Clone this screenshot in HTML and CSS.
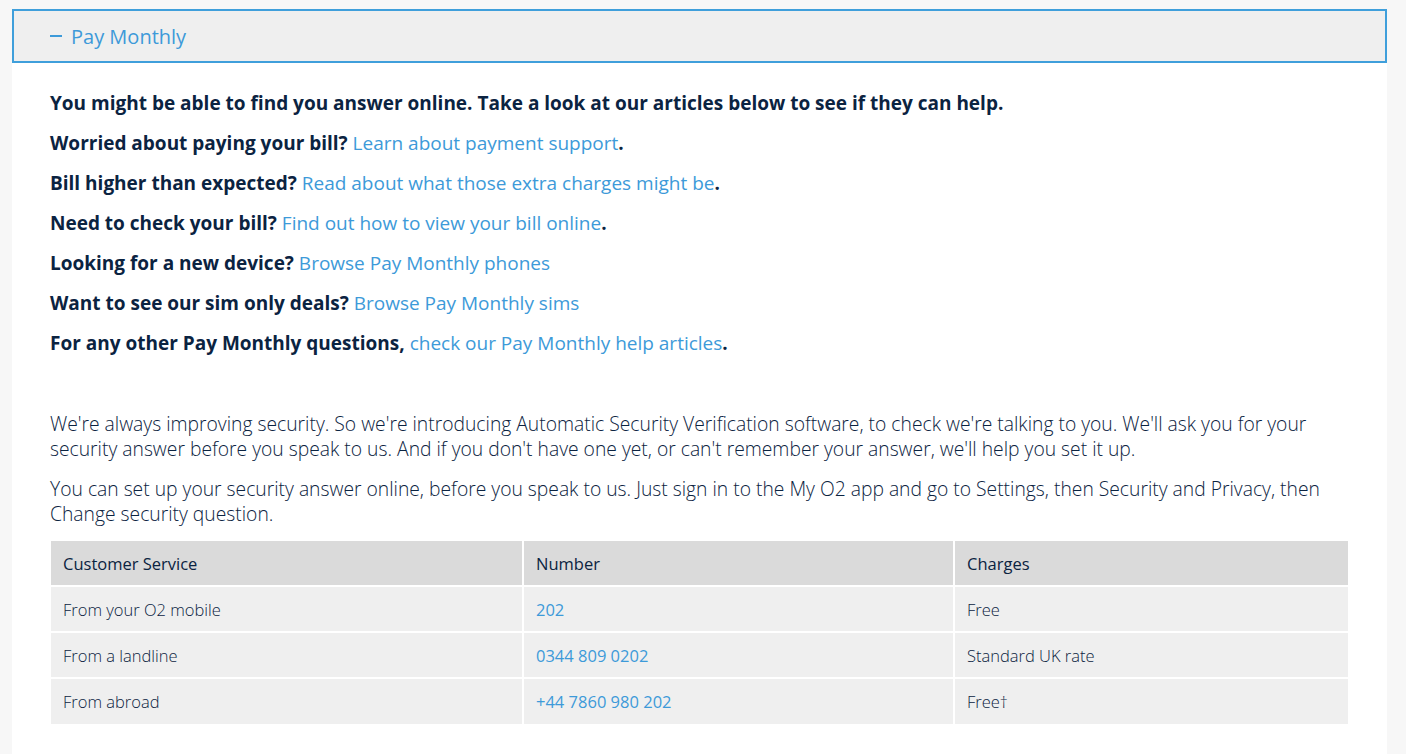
FILE: index.html
```html
<!DOCTYPE html>
<html lang="en">
<head>
    <meta charset="UTF-8">
    <meta name="viewport" content="width=device-width, initial-scale=1.0">
    <title>Pay Monthly - Contact us</title>
    <link rel="stylesheet" href="styles.css">
</head>
<body>
    <div class="accordion">
        <div class="accordion-header">
            <span class="toggle"></span>
            <span class="accordion-title">Pay Monthly</span>
        </div>
        <div class="accordion-body">
            <p class="lead">You might be able to find you answer online. Take a look at our articles below to see if they can help.</p>
            <p class="lead">Worried about paying your bill? <a href="#">Learn about payment support</a>.</p>
            <p class="lead">Bill higher than expected? <a href="#">Read about what those extra charges might be</a>.</p>
            <p class="lead">Need to check your bill? <a href="#">Find out how to view your bill online</a>.</p>
            <p class="lead">Looking for a new device? <a href="#">Browse Pay Monthly phones</a></p>
            <p class="lead">Want to see our sim only deals? <a href="#">Browse Pay Monthly sims</a></p>
            <p class="lead">For any other Pay Monthly questions, <a href="#">check our Pay Monthly help articles</a>.</p>

            <div class="security">
                <p>We're always improving security. So we're introducing Automatic Security Verification software, to check we're talking to you. We'll ask you for your security answer before you speak to us. And if you don't have one yet, or can't remember your answer, we'll help you set it up.</p>
                <p>You can set up your security answer online, before you speak to us. Just sign in to the My O2 app and go to Settings, then Security and Privacy, then Change security question.</p>
            </div>

            <table class="numbers">
                <thead>
                    <tr>
                        <th class="col-service">Customer Service</th>
                        <th class="col-number">Number</th>
                        <th>Charges</th>
                    </tr>
                </thead>
                <tbody>
                    <tr>
                        <td>From your O2 mobile</td>
                        <td><a href="#">202</a></td>
                        <td>Free</td>
                    </tr>
                    <tr>
                        <td>From a landline</td>
                        <td><a href="#">0344 809 0202</a></td>
                        <td>Standard UK rate</td>
                    </tr>
                    <tr>
                        <td>From abroad</td>
                        <td><a href="#">+44 7860 980 202</a></td>
                        <td>Free&dagger;</td>
                    </tr>
                </tbody>
            </table>
        </div>
    </div>
</body>
</html>
```

FILE: styles.css
```css
body {
    margin: 0;
    background: #f7f7f7;
    font-family: 'Open Sans', sans-serif;
    color: #0b2341;
}

a {
    color: #3d9ad9;
    text-decoration: none;
}

.accordion {
    margin: 9px 19px 0 12px;
    background: #fff;
    min-height: 745px;
}

.accordion-header {
    display: flex;
    align-items: center;
    height: 50px;
    padding-left: 36px;
    background: #efefef;
    border: 2px solid #3f9fdb;
    color: #3d9ad9;
    font-size: 20px;
}

.toggle {
    width: 12px;
    height: 2px;
    background: #3d9ad9;
    margin-right: 9px;
}

.accordion-body {
    padding: 20px 39px 20px 38px;
}

.lead {
    margin: 0;
    font-size: 19px;
    font-weight: 700;
    line-height: 40px;
}

.lead a {
    font-weight: 400;
}

.security {
    margin-top: 48px;
}

.security p {
    margin: 0 0 15px;
    font-size: 19.3px;
    font-weight: 300;
    line-height: 25px;
}

.numbers {
    width: calc(100% - 1px);
    margin: 1px 0 0 1px;
    border-collapse: collapse;
    font-size: 16.5px;
    font-weight: 300;
}

.numbers th,
.numbers td {
    height: 44px;
    padding: 0 12px;
    text-align: left;
    border: 2px solid #fff;
    border-top: 0;
    background: #efefef;
}

.numbers th {
    font-weight: 400;
    background: #dadada;
}

.numbers th:first-child,
.numbers td:first-child {
    border-left: 0;
}

.numbers th:last-child,
.numbers td:last-child {
    border-right: 0;
}

.numbers tr:last-child td {
    border-bottom: 0;
    height: 45px;
}

.numbers td a {
    font-weight: 400;
}

.col-service {
    width: 447px;
}

.col-number {
    width: 405px;
}
```
